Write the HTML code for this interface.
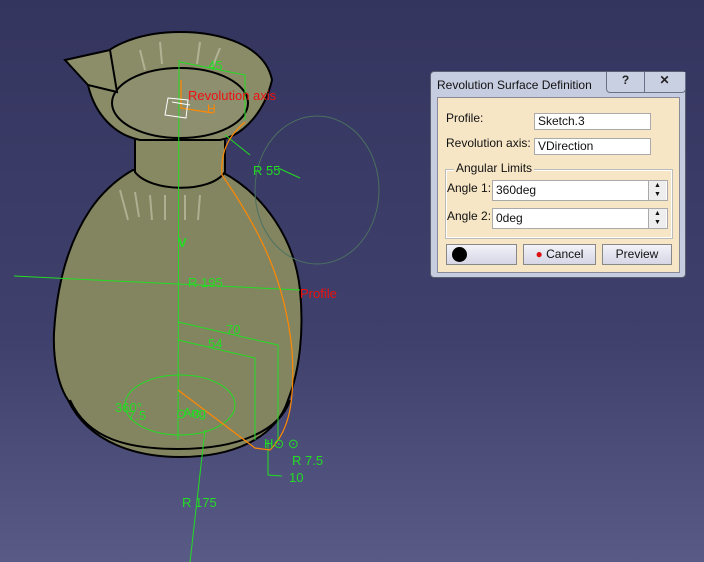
<!DOCTYPE html>
<html><head><style>
body{margin:0;width:704px;height:562px;overflow:hidden;background:linear-gradient(#34355f,#3f406c 60%,#595a86);font-family:"Liberation Sans",sans-serif;position:relative}
svg{position:absolute;left:0;top:0}
.dlg{position:absolute;left:430px;top:71px;width:256px;height:207px;background:#c7cde0;border:1px solid #5a6070;border-radius:4px;box-sizing:border-box}
.title{position:absolute;left:6px;top:6px;font-size:12px;color:#111}
.btns{position:absolute;left:175px;top:0;width:78px;height:20px;border:1px solid #6a7088;border-top:none;border-radius:0 0 4px 4px;background:#c9d0e2}
.btns div{position:absolute;top:0;height:20px;font-size:12px;font-weight:bold;text-align:center;line-height:17px;color:#222}
.body{position:absolute;left:6px;top:25px;width:243px;height:176px;background:#f6e6c6;border:1px solid #8a8a9a;box-sizing:border-box}
.lbl{position:absolute;font-size:12px;color:#111}
.inp{position:absolute;background:#fff;border:1px solid #aaa;height:17px;box-sizing:border-box;font-size:12px;line-height:15px;padding-left:3px;color:#111}
.btn{position:absolute;height:21px;background:linear-gradient(#f2f2f8,#d6d6e6);border:1px solid #888;box-sizing:border-box;font-size:12px;text-align:center;line-height:19px;color:#111}
.spin{position:absolute;width:17px;height:19px;right:1px;top:0;border-left:1px solid #aaa;background:#eee;font-size:7px;line-height:9px;text-align:center}
</style></head><body>
<svg width="704" height="562" viewBox="0 0 704 562">
<g stroke="#000" stroke-width="2" fill="#7f8159">
<path d="M133,170 C115,180 100,195 90,210 C70,240 57,280 54,333 C53,360 58,385 68,400 C90,445 140,457 180,457 C230,457 275,440 288,400 C300,370 304,330 300,290 C295,240 265,195 222,172 Z" fill="#838561"/>
<path d="M70,400 C88,440 130,449 178,449 C240,449 280,430 290,400" fill="none"/>
<path d="M135,138 L135,172 C150,192 210,194 225,172 L225,138 Z" fill="#878963"/>
<path d="M88,85 C95,115 115,135 140,140 L220,140 C245,135 265,110 272,80 C265,45 220,32 180,32 C140,32 112,45 100,58 Z" fill="#8a8c68"/>
<ellipse cx="180" cy="103" rx="68" ry="35" fill="#8d8f6e"/>
<path d="M65,60 L110,50 L117,92 L88,85 Z" fill="#8c8e6a"/>
</g>
<g stroke="#d0d1b8" stroke-width="2" opacity="0.55" fill="none">
<path d="M120,190 l8,30 M135,192 l4,25 M150,195 l2,25 M165,195 l0,25 M185,195 l0,25 M200,195 l-2,25 M140,50 l5,20 M160,42 l2,22 M200,42 l-3,22 M220,48 l-8,20"/>
</g>
<g stroke="#22dd22" stroke-width="1" fill="none">
<path d="M179,60 L178,440"/>
<path d="M14,276 L300,290"/>
<path d="M180,62 L245,75 L245,120"/>
<path d="M178,322 L278,345 L278,440"/>
<path d="M178,340 L255,358 L255,440"/>
<path d="M225,135 L250,155 M278,168 L300,178"/>
<ellipse cx="180" cy="405" rx="55" ry="30"/>
<path d="M205,430 L190,562"/>
<path d="M268,440 L268,475 L282,476"/>
</g>
<ellipse cx="317" cy="190" rx="62" ry="74" stroke="#4b7060" fill="none"/>
<g stroke="#ff8800" stroke-width="1.2" fill="none">
<path d="M245,122 C230,135 220,150 222,175 C260,230 285,280 292,350 C295,400 290,430 270,450 L255,448 L178,390"/>
<path d="M181,80 L181,108 L213,113"/>
</g>
<path d="M168,98 L188,100 L186,118 L165,115 Z M172,102 L190,105" stroke="#fff" fill="none"/>
<g font-family="Liberation Sans,sans-serif" font-size="13" fill="#22dd22">
<text x="208" y="70">45</text><text x="253" y="175">R 55</text>
<text x="178" y="247" font-weight="bold">V</text>
<text x="188" y="287">R 195</text><text x="226" y="334">70</text><text x="208" y="348">54</text>
<text x="115" y="412">360°</text><text x="128" y="420">7.5</text><text x="183" y="417">Ang</text>
<text x="292" y="465">R 7.5</text><text x="289" y="482">10</text><text x="182" y="507">R 175</text>
<text x="176" y="418">⊙ ⊙</text><text x="264" y="448">H⊙ ⊙</text>
</g>
<g font-family="Liberation Sans,sans-serif" font-size="13" fill="#ee1111">
<text x="188" y="100">Revolution axis</text><text x="300" y="298">Profile</text>
</g>
<text x="207" y="113" font-size="12" fill="#ff8800" font-family="Liberation Sans,sans-serif">H</text>
</svg>
<div class="dlg">
<div class="title">Revolution Surface Definition</div>
<div class="btns"><div style="left:0;width:37px;border-right:1px solid #6a7088">?</div><div style="left:38px;width:39px">✕</div></div>
<div class="body">
<div class="lbl" style="left:8px;top:13px">Profile:</div>
<div class="inp" style="left:96px;top:15px;width:117px">Sketch.3</div>
<div class="lbl" style="left:8px;top:38px">Revolution axis:</div>
<div class="inp" style="left:96px;top:40px;width:117px">VDirection</div>
<div style="position:absolute;left:8px;top:72px;width:224px;height:66px;border:1px solid #fff;outline:1px solid #bbb"></div>
<div class="lbl" style="left:16px;top:63px;background:#f6e6c6;padding:0 2px">Angular Limits</div>
<div class="lbl" style="left:9px;top:83px">Angle 1:</div>
<div class="inp" style="left:54px;top:82px;width:176px;height:21px;line-height:19px">360deg<div class="spin">▲<br>▼</div></div>
<div class="lbl" style="left:9px;top:111px">Angle 2:</div>
<div class="inp" style="left:54px;top:110px;width:176px;height:21px;line-height:19px">0deg<div class="spin">▲<br>▼</div></div>
<div class="btn" style="left:8px;top:146px;width:71px"><span style="position:absolute;left:5px;top:2px;width:15px;height:15px;background:#000;border-radius:50%"></span></div>
<div class="btn" style="left:85px;top:146px;width:73px"><span style="color:#d11">●</span> Cancel</div>
<div class="btn" style="left:164px;top:146px;width:70px">Preview</div>
</div>
</div>
</body></html>
